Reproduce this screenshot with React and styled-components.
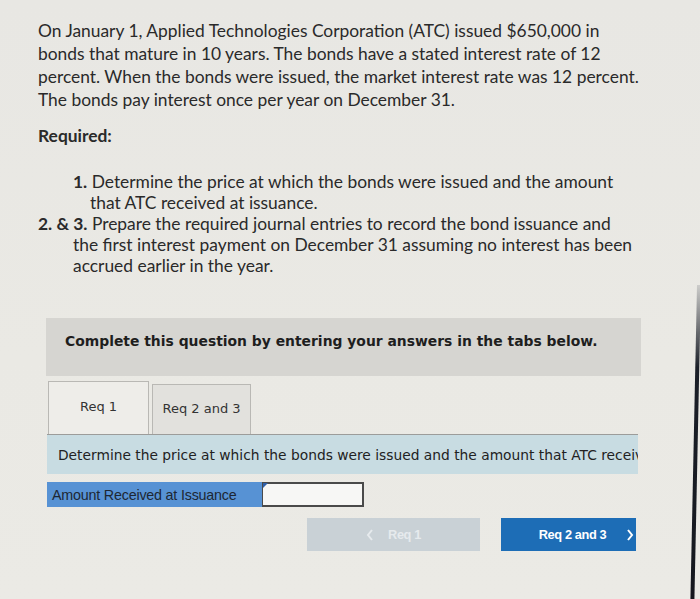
import styled, { createGlobalStyle } from "styled-components";

const GlobalStyle = createGlobalStyle`
  html, body {
    margin: 0;
    padding: 0;
    background: #e9e8e3;
  }
  * {
    box-sizing: border-box;
  }
`;

const Page = styled.div`
  position: relative;
  width: 700px;
  height: 599px;
  overflow: hidden;
  padding-top: 19px;
  background: linear-gradient(180deg, #e8e7e3 0%, #eae9e4 60%, #ebeae5 100%);
  color: #2a2a2a;
  font-family: Lato, "Open Sans", sans-serif;
`;

const Intro = styled.div`
  padding: 0 38px;
  font-size: 17.4px;
  line-height: 23px;
  white-space: nowrap;
`;

const Para = styled.p`
  margin: 0;
`;

const Heading = styled.div`
  margin-top: 13px;
  font-weight: 700;
`;

const List = styled.div`
  margin-top: 24px;
  line-height: 21px;
`;

const Item = styled.div`
  padding-left: ${(p) => p.$indent}px;
  text-indent: ${(p) => -p.$hang}px;
`;

const Num = styled.b`
  font-weight: 700;
`;

const Question = styled.div`
  margin: 42px 59px 0 46px;
  font-family: "DejaVu Sans", Verdana, sans-serif;
`;

const Banner = styled.div`
  height: 58px;
  display: flex;
  align-items: center;
  padding: 0 0 13px 19px;
  background: #d6d5d1;
  font-weight: 700;
  font-size: 13.9px;
  color: #1e1e1e;
`;

const Tabs = styled.div`
  display: flex;
  align-items: flex-end;
  gap: 3px;
  margin-top: 5px;
  padding-left: 2px;
`;

const Tab = styled.div`
  width: ${(p) => p.$w}px;
  height: ${(p) => (p.$active ? 53 : 50)}px;
  display: flex;
  align-items: center;
  justify-content: center;
  background: ${(p) => (p.$active ? "#eeede9" : "#e2e1dd")};
  border: 1px solid #b9b8b4;
  border-bottom: none;
  font-size: 13px;
  color: #333;
  padding-bottom: 3px;
`;

const Instruction = styled.div`
  height: 40px;
  margin-right: 3px;
  margin-left: 1px;
  display: flex;
  align-items: center;
  padding-left: 11px;
  background: #c8dce2;
  border-top: 1px solid #9c9c9a;
  font-size: 13.8px;
  color: #222;
  white-space: nowrap;
  overflow: hidden;
`;

const AnswerRow = styled.div`
  display: flex;
  margin-top: 8px;
  margin-left: 1px;
  height: 25px;
`;

const Label = styled.div`
  width: 215px;
  display: flex;
  align-items: center;
  padding-left: 5px;
  background: #5792d4;
  font-family: "Liberation Sans", Arial, sans-serif;
  font-size: 14.3px;
  color: #1d2733;
  letter-spacing: -0.2px;
`;

const Field = styled.div`
  position: relative;
  width: 102px;
  background: #f7f7f5;
  border: 2px solid #4a4a4a;
  border-left-width: 1px;

  &::before {
    content: "";
    position: absolute;
    top: -1px;
    left: 0;
    border-top: 5px solid #2f5fa8;
    border-right: 5px solid transparent;
  }
`;

const Nav = styled.div`
  display: flex;
  justify-content: flex-end;
  gap: 21px;
  margin-top: 11px;
  margin-right: 5px;
`;

const NavButton = styled.div`
  width: ${(p) => p.$w}px;
  height: 33px;
  display: flex;
  align-items: center;
  justify-content: center;
  gap: ${(p) => p.$gap}px;
  background: ${(p) => (p.$disabled ? "#c9d1d6" : "#1d6db6")};
  color: ${(p) => (p.$disabled ? "#e6eaed" : "#ffffff")};
  font-family: "Liberation Sans", Arial, sans-serif;
  font-weight: 700;
  font-size: 12.8px;
  letter-spacing: -0.4px;
  padding-left: ${(p) => p.$pl || 0}px;
`;

const Chevron = styled.svg`
  width: 8px;
  height: 12px;
  fill: none;
  stroke: currentColor;
  stroke-width: 2;
`;

const Bezel = styled.div`
  position: absolute;
  top: 285px;
  right: -1px;
  width: 4px;
  height: 330px;
  background: linear-gradient(180deg, rgba(40, 46, 60, 0.15), #1b1f28 25%, #14171d);
  transform: rotate(1.2deg);
  transform-origin: top center;
`;

const Left = () => (
  <Chevron viewBox="0 0 8 12">
    <path d="M6 1 L2 6 L6 11" />
  </Chevron>
);

const Right = () => (
  <Chevron viewBox="0 0 8 12">
    <path d="M2 1 L6 6 L2 11" />
  </Chevron>
);

const App = () => {
  return (
    <Page>
      <GlobalStyle />
      <Intro>
        <Para>
          On January 1, Applied Technologies Corporation (ATC) issued $650,000 in
          <br />
          bonds that mature in 10 years. The bonds have a stated interest rate of 12
          <br />
          percent. When the bonds were issued, the market interest rate was 12 percent.
          <br />
          The bonds pay interest once per year on December 31.
        </Para>
        <Heading>Required:</Heading>
        <List>
          <Item $indent={52} $hang={17}>
            <Num>1.</Num> Determine the price at which the bonds were issued and the
            amount
            <br />
            that ATC received at issuance.
          </Item>
          <Item $indent={35} $hang={35}>
            <Num>2. &amp; 3.</Num> Prepare the required journal entries to record the
            bond issuance and
            <br />
            the first interest payment on December 31 assuming no interest has been
            <br />
            accrued earlier in the year.
          </Item>
        </List>
      </Intro>

      <Question>
        <Banner>Complete this question by entering your answers in the tabs below.</Banner>
        <Tabs>
          <Tab $w={101} $active>Req 1</Tab>
          <Tab $w={99}>Req 2 and 3</Tab>
        </Tabs>
        <Instruction>
          Determine the price at which the bonds were issued and the amount that ATC
          received at issuance.
        </Instruction>
        <AnswerRow>
          <Label>Amount Received at Issuance</Label>
          <Field />
        </AnswerRow>
        <Nav>
          <NavButton $w={173} $gap={14} $disabled>
            <Left />
            Req 1
          </NavButton>
          <NavButton $w={135} $gap={20} $pl={36}>
            Req 2 and 3
            <Right />
          </NavButton>
        </Nav>
      </Question>
      <Bezel />
    </Page>
  );
};

export default App;
